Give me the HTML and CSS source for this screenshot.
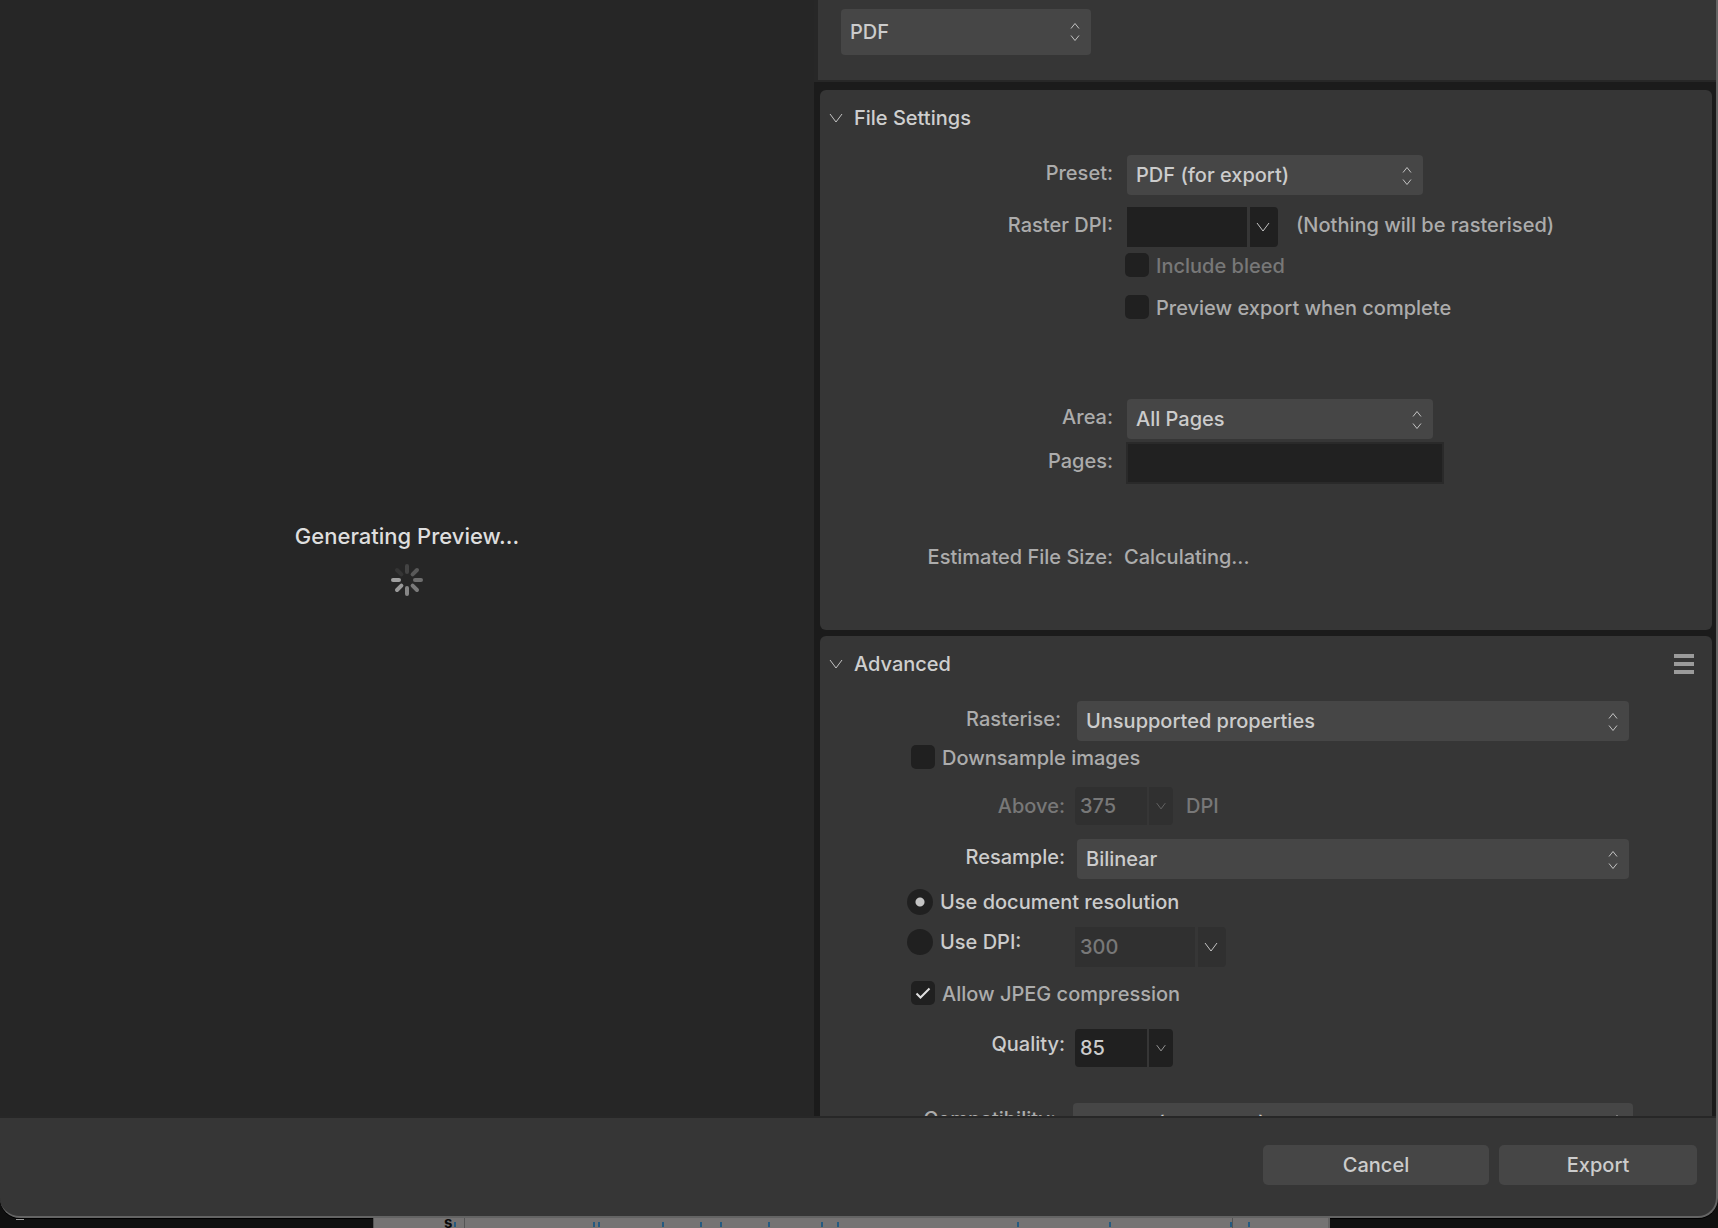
FILE: index.html
```html
<!DOCTYPE html>
<html lang="en">
<head>
<meta charset="utf-8">
<title>Export</title>
<link rel="stylesheet" href="styles.css">
</head>
<body>
<svg class="defs" aria-hidden="true">
  <symbol id="updown" viewBox="0 0 10 20"><path d="M1 6.5 5 1.5 9 6.5M1 13.5 5 18.5 9 13.5"/></symbol>
  <symbol id="down" viewBox="0 0 14 10"><path d="M1 1 7 9 13 1"/></symbol>
</svg>
<main class="dialog">
  <div class="content">
    <section class="preview" aria-live="polite">
      <p class="preview-text">Generating Preview...</p>
      <svg class="spinner" viewBox="-16 -16 32 32" aria-hidden="true">
        <path d="M0-8V-14" stroke="#444"/>
        <path d="M5.6-5.6 10-10" stroke="#595959"/>
        <path d="M8 0H14" stroke="#6e6e6e"/>
        <path d="M5.6 5.6 10 10" stroke="#7a7a7a"/>
        <path d="M0 8V14" stroke="#868686"/>
        <path d="M-5.6 5.6-10 10" stroke="#999"/>
        <path d="M-8 0H-14" stroke="#a0a0a0"/>
        <path d="M-5.6-5.6-10-10" stroke="#353535"/>
      </svg>
    </section>
    <section class="options">
      <div class="format">
        <span class="select format-select"><select aria-label="Format"><option>PDF</option></select><svg><use href="#updown"/></svg></span>
      </div>
      <div class="cards">
        <section class="card file-settings">
          <header class="card-head">
            <button class="toggle"><svg class="chevron"><use href="#down"/></svg>File Settings</button>
          </header>
          <div class="card-body">
            <div class="row">
              <label class="label" for="preset">Preset:</label>
              <span class="select preset-select"><select id="preset"><option>PDF (for export)</option></select><svg><use href="#updown"/></svg></span>
            </div>
            <div class="row dpi-row">
              <label class="label" for="raster">Raster DPI:</label>
              <span class="combo wide"><input id="raster" type="text"><button aria-label="Raster DPI values"><svg class="chevron"><use href="#down"/></svg></button></span>
              <span class="note">(Nothing will be rasterised)</span>
            </div>
            <label class="check bleed off"><input type="checkbox" disabled><span>Include bleed</span></label>
            <label class="check complete"><input type="checkbox"><span>Preview export when complete</span></label>
            <div class="row area-row">
              <label class="label" for="area">Area:</label>
              <span class="select area-select"><select id="area"><option>All Pages</option></select><svg><use href="#updown"/></svg></span>
            </div>
            <div class="row pages-row">
              <label class="label" for="pages">Pages:</label>
              <input class="pages" id="pages" type="text">
            </div>
            <div class="row size-row">
              <span class="label">Estimated File Size:</span>
              <output>Calculating...</output>
            </div>
          </div>
        </section>
        <section class="card advanced">
          <header class="card-head">
            <button class="toggle"><svg class="chevron"><use href="#down"/></svg>Advanced</button>
            <button class="menu" aria-label="Advanced menu"><svg viewBox="0 0 20 20"><path d="M0 2H20M0 10H20M0 18H20"/></svg></button>
          </header>
          <div class="card-body">
            <div class="row">
              <label class="label inset" for="rasterise">Rasterise:</label>
              <span class="select"><select id="rasterise"><option>Unsupported properties</option></select><svg><use href="#updown"/></svg></span>
            </div>
            <label class="check downsample"><input type="checkbox"><span>Downsample images</span></label>
            <div class="row above-row off">
              <label class="label level" for="above">Above:</label>
              <span class="combo small"><input id="above" type="text" value="375" disabled><button disabled aria-label="Above values"><svg class="chevron"><use href="#down"/></svg></button></span>
              <span class="unit">DPI</span>
            </div>
            <div class="row resample-row">
              <label class="label bright" for="resample">Resample:</label>
              <span class="select"><select id="resample"><option>Bilinear</option></select><svg><use href="#updown"/></svg></span>
            </div>
            <label class="radio document-radio"><input type="radio" name="res" checked>Use document resolution</label>
            <div class="row use-row">
              <label class="radio"><input type="radio" name="res">Use DPI:</label>
              <span class="combo wide dim"><input type="text" value="300" aria-label="DPI" disabled><button aria-label="DPI values"><svg class="chevron"><use href="#down"/></svg></button></span>
            </div>
            <label class="check jpeg"><input type="checkbox" checked><span>Allow JPEG compression</span></label>
            <div class="row quality-row">
              <label class="label bright raised" for="quality">Quality:</label>
              <span class="combo small"><input id="quality" type="text" value="85"><button aria-label="Quality values"><svg class="chevron"><use href="#down"/></svg></button></span>
            </div>
            <div class="row compat-row">
              <label class="label raised" for="compat">Compatibility:</label>
              <span class="select"><select id="compat"><option>PDF 1.7 (Acrobat 8)</option></select><svg><use href="#updown"/></svg></span>
            </div>
          </div>
        </section>
      </div>
    </section>
  </div>
  <footer class="actions">
    <button class="push cancel">Cancel</button>
    <button class="push export">Export</button>
  </footer>
</main>
<div class="backdrop">
  <svg class="handle" viewBox="0 0 8 10"><path d="M0 1.5H8"/></svg>
  <svg class="page" viewBox="0 0 957 10">
    <rect width="957" height="10" fill="#757373"/>
    <path d="M.5 0V10M956 0V10M91.500 0V10M859.500 0V10" stroke="#555"/>
    <path d="M82 4V9M221 4V9M226 4V9M290 4V9M328 4V9M348 4V9M396 4V9M449 4V9M465 4V9M645 4V9M737 4V9M858 4V9M876 4V9" stroke="#245a80" stroke-width="2"/>
    <text x="71" y="10" font-size="15" font-weight="700" fill="#0a0a0a">s</text>
  </svg>
</div>
</body>
</html>
```
FILE: styles.css
```css
* { box-sizing: border-box; }

body {
  margin: 0;
  height: 100vh;
  display: flex;
  flex-direction: column;
  overflow: hidden;
  background: #101010;
  color: #acacac;
  font: 500 20px/24px Inter, "Liberation Sans", sans-serif;
}

input, select, button { font: inherit; color: inherit; margin: 0; border: 0; }
button { padding: 0; background: none; }
svg { fill: none; display: block; }
.defs { position: absolute; width: 0; height: 0; }

.dialog {
  flex: 1;
  min-height: 0;
  display: flex;
  flex-direction: column;
  overflow: hidden;
  background: #363636;
  border: solid #646464;
  border-width: 0 2px 2px 0;
  border-radius: 0 0 20px 20px;
  box-shadow: 0 1px #000;
}

.content { flex: 1; min-height: 0; display: flex; }

.preview {
  flex: 814;
  display: flex;
  flex-direction: column;
  align-items: center;
  justify-content: center;
  gap: 16px;
  padding-top: 4px;
  background: #262626;
}
.preview-text { margin: 0; color: #dedede; font-size: 22px; }
.spinner { width: 32px; height: 32px; stroke-width: 4; stroke-linecap: round; }

.options { flex: 902; min-width: 0; display: flex; flex-direction: column; background: #1b1b1b; }

.format {
  padding: 9px 23px 25px;
  background: #363636;
  border: solid #272727;
  border-width: 0 0 2px 4px;
}

.cards {
  flex: 1;
  min-height: 0;
  overflow: hidden;
  display: flex;
  flex-direction: column;
  gap: 6px;
  padding: 8px 4px 0 6px;
}

.card { flex: none; background: #363636; border-radius: 6px; }
.card-head { display: flex; justify-content: space-between; padding: 16px 18px 16px 9px; }
.toggle { display: flex; align-items: center; gap: 11px; color: #cfcfcf; }
.menu svg { width: 20px; height: 20px; stroke: #9b9b9b; stroke-width: 4; }
.chevron { width: 14px; height: 10px; stroke: #c4c4c4; }
.card-body { display: flex; flex-direction: column; padding-top: 9px; }
.file-settings .card-body { padding-bottom: 61px; }

.row { display: flex; align-items: center; gap: 14px; }
.label { flex: none; width: 293px; text-align: right; padding-bottom: 4px; }
.bright, .radio { color: #cccccc; }
.off { color: #787878; }

.select { flex: 1; position: relative; display: block; height: 40px; }
.select select {
  width: 100%;
  height: 100%;
  padding: 0 9px;
  appearance: none;
  background: #464646;
  border-radius: 4px;
  color: #cccccc;
}
.select svg {
  position: absolute;
  right: 11px;
  top: 11px;
  width: 10px;
  height: 20px;
  stroke: #c4c4c4;
  pointer-events: none;
}
.format-select { width: 250px; height: 46px; }
.format-select svg { top: 13px; }
.preset-select { flex: none; width: 296px; }
.area-select { flex: none; width: 306px; }

.combo { display: flex; gap: 3px; height: 40px; }
.combo input { width: 120px; padding: 0 5px; background: #202020; }
.combo button {
  width: 28px;
  display: grid;
  place-items: center;
  background: #202020;
  border-radius: 0 4px 4px 0;
}
.combo.wide button { padding-right: 2px; }
.combo.small { height: 38px; gap: 2px; color: #cccccc; }
.combo.small input { width: 72px; border-radius: 4px 0 0 4px; }
.combo.small button { width: 24px; }
.combo.small .chevron { width: 10px; height: 8px; }
.off .combo input, .off .combo button, .dim input, .dim button { background: #303030; }
.off .combo input, .dim input { color: #787878; }
.off .chevron { stroke: #787878; }

.check, .radio { display: flex; align-items: center; gap: 7px; }
.check { height: 24px; }
.check span { padding-top: 2px; }
.check input, .radio input { appearance: none; flex: none; background: #202020; }
.check input { width: 24px; height: 24px; border-radius: 5px; }
.check input:checked {
  background: #202020 url("data:image/svg+xml,%3Csvg xmlns='http://www.w3.org/2000/svg' viewBox='0 0 24 24'%3E%3Cpath d='M5.500 12.500 9.500 16.500 18.500 7.500' fill='none' stroke='%23e0e0e0' stroke-width='2'/%3E%3C/svg%3E");
}
.radio input { width: 26px; height: 26px; border-radius: 50%; }
.radio input:checked { background: radial-gradient(circle, #c4c4c4 4px, #202020 5px); }

/* File Settings */
.dpi-row { margin-top: 12px; }
.note { padding: 0 0 4px 4px; }
.bleed { margin: 6px 0 0 305px; }
.complete { margin: 18px 0 0 305px; }
.area-row { margin-top: 80px; }
.pages-row { margin-top: 3px; gap: 13px; }
.pages { width: 318px; height: 42px; background: #212121; border: 2px solid #2a2a2a; }
.size-row { margin-top: 61px; gap: 11px; }
.size-row .label { padding: 0; }

/* Advanced */
.advanced .label { width: 245px; }
.advanced .row { gap: 12px; padding-right: 83px; }
.advanced .inset { padding-right: 4px; }
.advanced .level { padding-bottom: 0; }
.advanced .raised { padding-bottom: 8px; }
.advanced .check { margin-left: 91px; }
.downsample { margin-top: 4px; }
.advanced .above-row { margin-top: 18px; gap: 10px; }
.unit { padding-left: 3px; }
.resample-row { margin-top: 14px; }
.radio { margin-left: 87px; }
.document-radio { margin-top: 10px; }
.use-row { margin-top: 12px; }
.advanced .use-row { gap: 0; }
.use-row .radio { width: 168px; padding-bottom: 10px; }
.jpeg { margin-top: 14px; }
.advanced .quality-row { margin-top: 24px; gap: 10px; }
.advanced .compat-row { margin-top: 36px; gap: 8px; padding-right: 79px; }
.advanced .compat-row .label { padding-right: 9px; }
.compat-row select { padding-top: 2px; }

.actions {
  display: flex;
  justify-content: flex-end;
  gap: 10px;
  padding: 27px 19px 31px;
  border-top: 2px solid #272727;
}
.push { height: 40px; background: #464646; border-radius: 5px; color: #cccccc; }
.cancel { width: 226px; }
.export { width: 198px; }

.backdrop { flex: none; display: flex; height: 10px; padding-left: 16px; }
.handle { width: 8px; height: 10px; stroke: #999; margin-right: 349px; }
.page { flex: none; width: 957px; height: 10px; }
```
